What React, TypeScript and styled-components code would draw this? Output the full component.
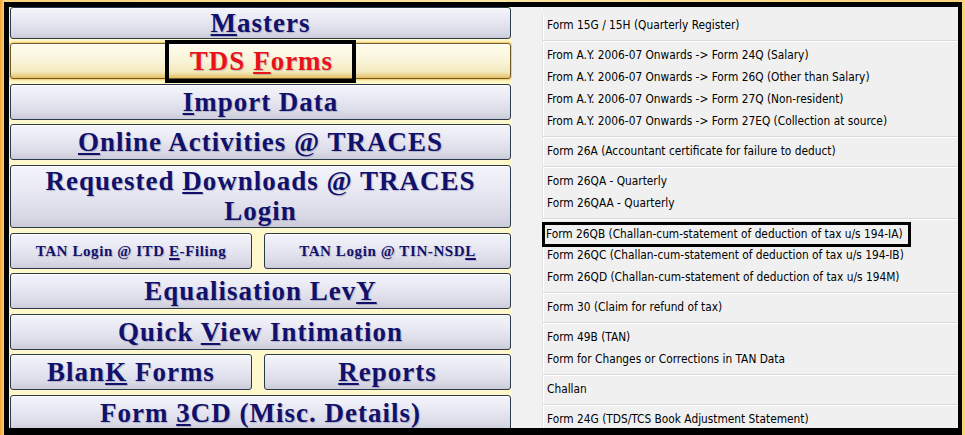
import React from 'react';
import styled, { createGlobalStyle, css } from 'styled-components';

const GlobalStyle = createGlobalStyle`
  html, body {
    margin: 0;
    padding: 0;
  }
  body {
    width: 965px;
    height: 435px;
    overflow: hidden;
    background: #f6bd55;
  }
`;

const Screen = styled.div`
  width: 965px;
  height: 435px;
  box-sizing: border-box;
  padding: 2px 3px 0 4px;
  background: linear-gradient(to right, #efa233 0px, #fbd37c 4px, #fde7a4 50%, #fbd37c 100%);
`;

const Frame = styled.div`
  height: 100%;
  box-sizing: border-box;
  border-style: solid;
  border-color: #000;
  border-width: 5px 4px 7px 5px;
  display: grid;
  grid-template-columns: 503px 1fr;
  overflow: hidden;
  background: #fef8cc;
`;

const Nav = styled.div`
  display: flex;
  flex-direction: column;
  gap: 4.5px;
  padding: 0 1px;
  background: #fef8cc;
  overflow: hidden;
`;

const NavRow = styled.div`
  display: grid;
  grid-template-columns: 242px 1fr;
  gap: 12px;
  height: 36px;
  flex: none;
`;

const NavButton = styled.div<{ $active?: boolean; $small?: boolean; $h?: number }>`
  box-sizing: border-box;
  height: ${p => p.$h ?? 36}px;
  flex: none;
  display: flex;
  align-items: center;
  justify-content: center;
  text-align: center;
  border: 1px solid #2b3a4a;
  border-radius: 3px;
  background: linear-gradient(to bottom, #f4f4fb 0%, #e7e7f2 45%, #dadae7 80%, #cbcbd9 100%);
  box-shadow: inset 0 1px 0 #ffffff;
  font-family: 'Liberation Serif', 'Times New Roman', serif;
  font-weight: 700;
  font-size: ${p => (p.$small ? 15 : 27)}px;
  letter-spacing: ${p => (p.$small ? 0.6 : 1)}px;
  line-height: 30px;
  color: #11116b;
  text-shadow: 1px 1px 1px rgba(80, 80, 120, 0.3);
  ${p =>
    p.$active &&
    css`
      border-color: #6d5a26;
      background: linear-gradient(to bottom, #fefcec 0%, #f9f4da 50%, #f3e9bd 82%, #e4bf62 100%);
      box-shadow: 0 0 2px 1px #f3c45a, inset 0 1px 0 #ffffff;
      color: #e8121a;
    `}
`;

const Key = styled.span`
  text-decoration: underline;
  text-decoration-thickness: 2px;
  text-underline-offset: 2px;
`;

const Marked = styled.span`
  box-sizing: border-box;
  display: flex;
  align-items: center;
  height: 43px;
  padding: 0 19px 0 21px;
  border: 4px solid #000;
`;

const Menu = styled.div`
  display: grid;
  grid-template-columns: 30px 1fr;
  background: #f0f0f0;
  padding-top: 7px;
`;

const Gutter = styled.div`
  background: #f1f1f1;
`;

const List = styled.div`
  display: flex;
  flex-direction: column;
  border-left: 1px solid #e2e3e3;
  box-shadow: inset 1px 0 0 #ffffff;
`;

const Item = styled.div`
  height: 22px;
  flex: none;
  padding-left: 4px;
  font-family: 'DejaVu Sans Condensed', 'DejaVu Sans', sans-serif;
  font-stretch: condensed;
  font-size: 11.8px;
  line-height: 22px;
  color: #000;
  white-space: nowrap;
`;

const Boxed = styled.span`
  box-sizing: border-box;
  display: inline-block;
  height: 25px;
  line-height: 19px;
  margin-left: -5px;
  padding: 0 5px 0 1px;
  border: 3px solid #000;
  vertical-align: top;
`;

const Separator = styled.div`
  flex: none;
  height: 1px;
  margin: 4px 0 2px;
  background: #d8d8d8;
  border-bottom: 1px solid #ffffff;
`;

type Entry = { text: string; boxed?: boolean } | 'sep';

const entries: Entry[] = [
  { text: 'Form 15G / 15H (Quarterly Register)' },
  'sep',
  { text: 'From A.Y. 2006-07 Onwards -> Form 24Q (Salary)' },
  { text: 'From A.Y. 2006-07 Onwards -> Form 26Q (Other than Salary)' },
  { text: 'From A.Y. 2006-07 Onwards -> Form 27Q (Non-resident)' },
  { text: 'From A.Y. 2006-07 Onwards -> Form 27EQ (Collection at source)' },
  'sep',
  { text: 'Form 26A (Accountant certificate for failure to deduct)' },
  'sep',
  { text: 'Form 26QA - Quarterly' },
  { text: 'Form 26QAA - Quarterly' },
  'sep',
  { text: 'Form 26QB (Challan-cum-statement of deduction of tax u/s 194-IA)', boxed: true },
  { text: 'Form 26QC (Challan-cum-statement of deduction of tax u/s 194-IB)' },
  { text: 'Form 26QD (Challan-cum-statement of deduction of tax u/s 194M)' },
  'sep',
  { text: 'Form 30 (Claim for refund of tax)' },
  'sep',
  { text: 'Form 49B (TAN)' },
  { text: 'Form for Changes or Corrections in TAN Data' },
  'sep',
  { text: 'Challan' },
  'sep',
  { text: 'Form 24G (TDS/TCS Book Adjustment Statement)' },
];

export default function App() {
  return (
    <>
      <GlobalStyle />
      <Screen>
        <Frame>
          <Nav>
            <NavButton $h={31.5}>
              <span><Key>M</Key>asters</span>
            </NavButton>
            <NavButton $active>
              <Marked>
                <span>TDS <Key>F</Key>orms</span>
              </Marked>
            </NavButton>
            <NavButton>
              <span><Key>I</Key>mport Data</span>
            </NavButton>
            <NavButton>
              <span><Key>O</Key>nline Activities @ TRACES</span>
            </NavButton>
            <NavButton $h={63.5}>
              <span>Requested <Key>D</Key>ownloads @ TRACES<br />Login</span>
            </NavButton>
            <NavRow>
              <NavButton $small>
                <span>TAN Login @ ITD <Key>E</Key>-Filing</span>
              </NavButton>
              <NavButton $small>
                <span>TAN Login @ TIN-NSD<Key>L</Key></span>
              </NavButton>
            </NavRow>
            <NavButton>
              <span>Equalisation Lev<Key>Y</Key></span>
            </NavButton>
            <NavButton>
              <span>Quick <Key>V</Key>iew Intimation</span>
            </NavButton>
            <NavRow>
              <NavButton>
                <span>Blan<Key>K</Key> Forms</span>
              </NavButton>
              <NavButton>
                <span><Key>R</Key>eports</span>
              </NavButton>
            </NavRow>
            <NavButton>
              <span>Form <Key>3</Key>CD (Misc. Details)</span>
            </NavButton>
          </Nav>
          <Menu>
            <Gutter />
            <List>
              {entries.map((e, i) =>
                e === 'sep' ? (
                  <Separator key={i} />
                ) : (
                  <Item key={i}>{e.boxed ? <Boxed>{e.text}</Boxed> : e.text}</Item>
                )
              )}
            </List>
          </Menu>
        </Frame>
      </Screen>
    </>
  );
}
